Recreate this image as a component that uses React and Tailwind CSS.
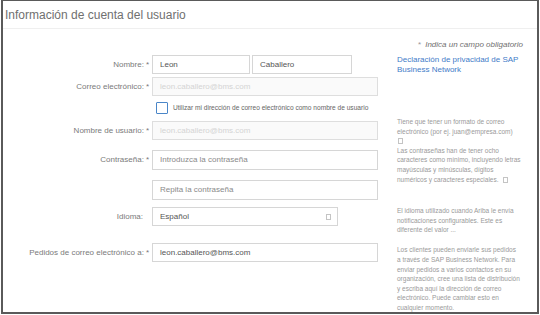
function Field({ label, required, children, className = "" }) {
  return (
    <div className={`flex items-center ${className}`}>
      <div className="w-[149px] shrink-0 pr-[3px] text-right text-[8px] text-[#7a7a7a]">
        {label}
        {required ? <span className="ml-[2px] text-[#777]">*</span> : <span className="ml-[2px] inline-block w-[4px]" />}
      </div>
      {children}
    </div>
  );
}

function Box({ className = "", children, disabled }) {
  return (
    <div
      className={`flex h-full items-center border px-[7px] text-[8px] ${
        disabled ? "border-[#dedede] bg-[#fafafa] text-[#d4d4d4]" : "border-[#d6d6d6] bg-white text-[#555]"
      } ${className}`}
    >
      {children}
    </div>
  );
}

function Tofu({ className = "" }) {
  return <span className={`inline-block h-[6px] w-[5px] border border-[#c4c4c4] align-middle ${className}`} />;
}

export default function App() {
  return (
    <div className="h-[315px] w-[540px] overflow-hidden bg-white" style={{ fontFamily: '"Liberation Sans", Arial, sans-serif' }}>
      <div className="ml-[1px] flex h-[314px] w-[538px] flex-col border-2 border-t-[1px] border-[#5a5a5a]">
        <div className="flex h-[28px] shrink-0 items-center border-b border-[#efefef] pl-[2px] text-[12px] text-[#707070]">
          Información de cuenta del usuario
        </div>

        <div className="flex flex-1">
          <div className="w-[377px] shrink-0 pt-[26px]">
            <Field label="Nombre:" required className="h-[19px]">
              <div className="flex h-full gap-[2px]">
                <Box className="w-[98px]">Leon</Box>
                <Box className="w-[100px]">Caballero</Box>
              </div>
            </Field>
            <Field label="Correo electrónico:" required className="mt-[3px] h-[19px]">
              <Box disabled className="w-[226px]">leon.caballero@bms.com</Box>
            </Field>
            <div className="mt-[6px] flex h-[12px] items-center pl-[153px]">
              <span className="h-[12px] w-[12px] rounded-[1px] border border-[#4a86c8] bg-white" />
              <span className="ml-[5px] text-[6.6px] text-[#666]">
                Utilizar mi dirección de correo electrónico como nombre de usuario
              </span>
            </div>
            <Field label="Nombre de usuario:" required className="mt-[7px] h-[19px]">
              <Box disabled className="w-[226px]">leon.caballero@bms.com</Box>
            </Field>
            <Field label="Contraseña:" required className="mt-[10px] h-[20px]">
              <Box className="w-[226px] !text-[#8a8a8a]">Introduzca la contraseña</Box>
            </Field>
            <Field label="" className="mt-[10px] h-[20px]">
              <Box className="w-[226px] !text-[#8a8a8a]">Repita la contraseña</Box>
            </Field>
            <Field label="Idioma:" className="mt-[7px] h-[19px]">
              <Box className="w-[186px] justify-between">
                <span>Español</span>
                <Tofu className="mr-[-1px]" />
              </Box>
            </Field>
            <Field label="Pedidos de correo electrónico a:" required className="mt-[17px] h-[19px]">
              <Box className="w-[226px]">leon.caballero@bms.com</Box>
            </Field>
          </div>

          <div className="ml-[17px] w-[126px] pt-[10px] text-[#9a9a9a]">
            <div className="text-right text-[8px] italic text-[#707070]">
              <span className="mr-[4px] not-italic text-[#999]">*</span>Indica un campo obligatorio
            </div>
            <div className="mt-[4px] text-[8px] leading-[10px] text-[#3f7bc8]">
              Declaración de privacidad de SAP
              <br />
              Business Network
            </div>
            <div className="mt-[42px] text-[6.5px] leading-[9.6px]">
              <div>
                Tiene que tener un formato de correo
                <br />
                electrónico (por ej. juan@empresa.com)
              </div>
              <div>
                <Tofu className="ml-[1px]" />
              </div>
              <div>
                Las contraseñas han de tener ocho
                <br />
                caracteres como mínimo, incluyendo letras
                <br />
                mayúsculas y minúsculas, dígitos
                <br />
                numéricos y caracteres especiales. <Tofu className="ml-[3px]" />
              </div>
              <div className="mt-[22px]">
                El idioma utilizado cuando Ariba le envía
                <br />
                notificaciones configurables. Este es
                <br />
                diferente del valor ...
              </div>
              <div className="mt-[10.5px]">
                Los clientes pueden enviarle sus pedidos
                <br />
                a través de SAP Business Network. Para
                <br />
                enviar pedidos a varios contactos en su
                <br />
                organización, cree una lista de distribución
                <br />
                y escriba aquí la dirección de correo
                <br />
                electrónico. Puede cambiar esto en
                <br />
                cualquier momento.
              </div>
            </div>
          </div>
        </div>
      </div>
    </div>
  );
}
